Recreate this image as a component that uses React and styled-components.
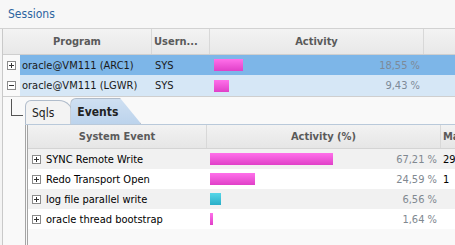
import React from 'react';
import styled, { createGlobalStyle } from 'styled-components';

const GlobalStyle = createGlobalStyle`
  body {
    margin: 0;
    background: #ffffff;
    font-family: "DejaVu Sans Condensed", "DejaVu Sans", "Liberation Sans", sans-serif;
    font-size: 11px;
  }
`;

const Window = styled.div`
  width: 455px;
  height: 245px;
  overflow: hidden;
  background: #f4f4f4;
  display: flex;
  flex-direction: column;
`;

const TitleBar = styled.div`
  height: 28px;
  flex: none;
  display: flex;
  align-items: center;
  padding-left: 8px;
  font-size: 12px;
  color: #2d64a0;
  background: #f7f7f7;
  border-bottom: 1px solid #d2d2d2;
`;

const Grid = styled.div`
  flex: 1;
  margin-left: 2px;
  border-left: 1px solid #c9c9c9;
  display: flex;
  flex-direction: column;
  background: #f9f9f9;
`;

const OuterRow = styled.div`
  display: grid;
  grid-template-columns: 17px 132px 58px 214px 1fr;
  align-items: center;
  height: ${p => p.$h || 20}px;
`;

const HeaderRow = styled(OuterRow)`
  background: linear-gradient(#f3f3f3, #e8e8e8);
  border-bottom: 1px solid #cfcfcf;
  color: #5a5a5a;
  font-weight: bold;
`;

const HeadCell = styled.div`
  height: 100%;
  display: flex;
  align-items: center;
  justify-content: ${p => (p.$left ? 'flex-start' : 'center')};
  padding-left: ${p => (p.$left ? 2 : 0)}px;
  border-right: ${p => (p.$last ? 'none' : '1px solid #d8d8d8')};
  grid-column: ${p => p.$span || 'auto'};
  white-space: nowrap;
  overflow: hidden;
`;

const SessionRow = styled(OuterRow)`
  color: #1a1a1a;
  background: ${p => (p.$selected ? '#7db6e8' : '#d6e7f6')};
`;

const ExpCell = styled.div`
  height: 100%;
  display: flex;
  align-items: center;
  justify-content: center;
  background: ${p => (p.$clear ? 'transparent' : '#f9f9f9')};
`;

const Cell = styled.div`
  height: 100%;
  display: flex;
  align-items: center;
  padding-left: ${p => p.$pad ?? 2}px;
  white-space: nowrap;
  overflow: hidden;
`;

const ActivityCell = styled.div`
  height: 100%;
  position: relative;
  display: flex;
  align-items: center;
  justify-content: flex-end;
  padding-right: 4px;
  color: ${p => p.$color || '#7d8a98'};
`;

const Bar = styled.div`
  position: absolute;
  left: ${p => p.$left ?? 4}px;
  top: 50%;
  height: 12px;
  margin-top: -6px;
  background: ${p =>
    p.$cyan
      ? 'linear-gradient(#56d6e8, #2aaec8)'
      : 'linear-gradient(#ff70ea, #e040c8)'};
`;

const Detail = styled.div`
  flex: 1;
  display: flex;
  border-top: 1px solid #cfcfcf;
  background: #f9f9f9;
`;

const TreeGutter = styled.div`
  width: 22px;
  flex: none;
  position: relative;
`;

const TreeLine = styled.div`
  position: absolute;
  left: 8px;
  top: 2px;
  width: 11px;
  height: 16px;
  border-left: 1px solid #555;
  border-bottom: 1px solid #555;
`;

const TabPanel = styled.div`
  flex: 1;
  display: flex;
  flex-direction: column;
  padding-top: 2px;
`;

const TabStrip = styled.div`
  height: 25px;
  display: flex;
  align-items: flex-end;
  border-bottom: 1px solid #b9c9da;
`;

const Tab = styled.div`
  height: ${p => (p.$active ? 25 : 23)}px;
  display: flex;
  align-items: center;
  padding: ${p => (p.$active ? '0 22px 0 6px' : '0 18px 0 6px')};
  margin-left: ${p => (p.$active ? -3 : 0)}px;
  border: 1px solid #b0bccb;
  border-bottom: none;
  border-radius: 6px 14px 0 0;
  font-size: 12px;
  font-weight: ${p => (p.$active ? 'bold' : 'normal')};
  color: #222;
  background: ${p => (p.$active ? 'linear-gradient(#cfe0f2, #bcd3ec)' : '#f3f3f3')};
  clip-path: ${p => (p.$active ? 'polygon(0 0, 70% 0, 100% 100%, 0 100%)' : 'none')};
  z-index: ${p => (p.$active ? 1 : 0)};
`;

const Inner = styled.div`
  flex: 1;
  border-left: 3px double #a5a5a5;
  background: #f9f9f9;
`;

const InnerRow = styled.div`
  display: grid;
  grid-template-columns: 17px 162px 234px 1fr;
  align-items: center;
  height: 20px;
  background: ${p => p.$bg || 'transparent'};
`;

const InnerHeader = styled(InnerRow)`
  height: 23px;
  background: linear-gradient(#f2f2f2, #e6e6e6);
  border-bottom: 1px solid #d4d4d4;
  color: #5a5a5a;
  font-weight: bold;
`;

const ExpBox = ({ minus }) => (
  <svg width="9" height="9" viewBox="0 0 9 9">
    <rect x="0.5" y="0.5" width="8" height="8" fill="#fff" stroke="#8a8a8a" />
    <line x1="2" y1="4.5" x2="7" y2="4.5" stroke="#333" />
    {!minus && <line x1="4.5" y1="2" x2="4.5" y2="7" stroke="#333" />}
  </svg>
);

const events = [
  { name: 'SYNC Remote Write', w: 123, val: '67,21 %', extra: '29', bg: '#f1f1f1' },
  { name: 'Redo Transport Open', w: 45, val: '24,59 %', extra: '1', bg: '#ffffff' },
  { name: 'log file parallel write', w: 11, val: '6,56 %', cyan: true, bg: '#f1f1f1' },
  { name: 'oracle thread bootstrap', w: 3, val: '1,64 %', bg: '#ffffff' },
];

export default function App() {
  return (
    <>
      <GlobalStyle />
      <Window>
        <TitleBar>Sessions</TitleBar>
        <Grid>
          <HeaderRow $h={25}>
            <HeadCell $span="1 / 3">Program</HeadCell>
            <HeadCell $left>Usern...</HeadCell>
            <HeadCell>Activity</HeadCell>
            <HeadCell $last />
          </HeaderRow>
          <SessionRow $selected>
            <ExpCell><ExpBox /></ExpCell>
            <Cell>oracle@VM111 (ARC1)</Cell>
            <Cell $pad={3}>SYS</Cell>
            <ActivityCell>
              <Bar style={{ width: 29 }} />
              18,55 %
            </ActivityCell>
            <Cell />
          </SessionRow>
          <SessionRow $h={21}>
            <ExpCell><ExpBox minus /></ExpCell>
            <Cell>oracle@VM111 (LGWR)</Cell>
            <Cell $pad={3}>SYS</Cell>
            <ActivityCell>
              <Bar style={{ width: 15 }} />
              9,43 %
            </ActivityCell>
            <Cell />
          </SessionRow>
          <Detail>
            <TreeGutter>
              <TreeLine />
            </TreeGutter>
            <TabPanel>
              <TabStrip>
                <Tab>Sqls</Tab>
                <Tab $active>Events</Tab>
              </TabStrip>
              <Inner>
                <InnerHeader>
                  <HeadCell $span="1 / 3">System Event</HeadCell>
                  <HeadCell>Activity (%)</HeadCell>
                  <HeadCell $left $last>Ma</HeadCell>
                </InnerHeader>
                {events.map(e => (
                  <InnerRow key={e.name} $bg={e.bg}>
                    <ExpCell $clear><ExpBox /></ExpCell>
                    <Cell $pad={1}>{e.name}</Cell>
                    <ActivityCell $color="#808890">
                      <Bar $left={3} $cyan={e.cyan} style={{ width: e.w }} />
                      {e.val}
                    </ActivityCell>
                    <Cell $pad={2}>{e.extra}</Cell>
                  </InnerRow>
                ))}
              </Inner>
            </TabPanel>
          </Detail>
        </Grid>
      </Window>
    </>
  );
}
